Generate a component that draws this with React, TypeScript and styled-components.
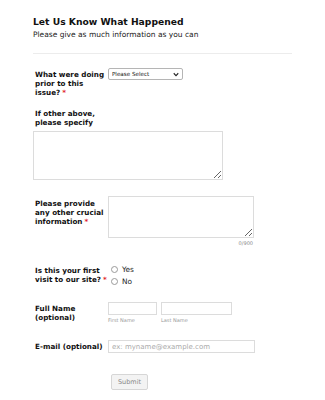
import React from "react";
import styled, { createGlobalStyle } from "styled-components";

const Global = createGlobalStyle`
  html, body { margin: 0; padding: 0; background: #fff; }
  body { font-family: "DejaVu Sans", Verdana, sans-serif; color: #111; }
  * { box-sizing: border-box; }
`;

const chevron =
  "data:image/svg+xml;utf8," +
  encodeURIComponent(
    '<svg xmlns="http://www.w3.org/2000/svg" width="8" height="6" viewBox="0 0 8 6"><path d="M1 1.5 L4 4.5 L7 1.5" fill="none" stroke="#222" stroke-width="1.4"/></svg>'
  );

const Page = styled.div`
  width: 325px;
  padding: 15px 33px 0 33px;
`;

const Header = styled.div`
  padding-bottom: 13px;
  border-bottom: 1px solid #ececec;
  width: 259px;
`;

const Title = styled.h1`
  margin: 0;
  font-size: 9.2px;
  line-height: 14px;
  font-weight: bold;
  color: #111;
`;

const Subtitle = styled.p`
  margin: 1px 0 0 0;
  font-size: 7.5px;
  line-height: 10px;
  color: #222;
`;

const Form = styled.form`
  display: flex;
  flex-direction: column;
`;

const Row = styled.div<{ $top: number; $stack?: boolean }>`
  display: flex;
  flex-direction: ${(p) => (p.$stack ? "column" : "row")};
  align-items: flex-start;
  margin-top: ${(p) => p.$top}px;
`;

const Label = styled.label<{ $width?: number; $pt?: number }>`
  width: ${(p) => (p.$width ? `${p.$width}px` : "75px")};
  padding-left: 2px;
  padding-top: ${(p) => p.$pt ?? 2}px;
  font-size: 7.2px;
  line-height: 9px;
  font-weight: bold;
  color: #111;
  flex-shrink: 0;
`;

const Req = styled.span`
  color: #e0141e;
  margin-left: 2px;
`;

const Select = styled.select`
  appearance: none;
  -webkit-appearance: none;
  width: 75px;
  height: 12px;
  font-family: "DejaVu Sans", Verdana, sans-serif;
  font-size: 5.6px;
  padding: 0 10px 0 3px;
  border: 1px solid #b5b5b5;
  border-radius: 2px;
  background: #fff url("${chevron}") no-repeat right 3px center / 6px 4.5px;
  color: #111;
  margin-left: 1px;
`;

const TextArea = styled.textarea<{ $w: number; $h: number }>`
  width: ${(p) => p.$w}px;
  height: ${(p) => p.$h}px;
  border: 1px solid #dcdcdc;
  border-radius: 0;
  padding: 2px;
  font-family: "DejaVu Sans", Verdana, sans-serif;
  font-size: 7px;
  display: block;
`;

const FieldCol = styled.div`
  display: flex;
  flex-direction: column;
`;

const Counter = styled.div`
  font-size: 5px;
  color: #888;
  text-align: right;
  margin-top: 2px;
  padding-right: 1px;
`;

const RadioList = styled.div`
  display: flex;
  flex-direction: column;
  gap: 3px;
  padding-left: 3px;
`;

const RadioItem = styled.label`
  display: flex;
  align-items: center;
  gap: 4px;
  font-size: 7.4px;
  line-height: 9px;
  color: #222;
`;

const Radio = styled.input`
  appearance: none;
  -webkit-appearance: none;
  width: 7px;
  height: 7px;
  margin: 0;
  border: 1px solid #9a9a9a;
  border-radius: 50%;
  background: #fff;
`;

const NameFields = styled.div`
  display: flex;
  gap: 4px;
`;

const SubField = styled.div`
  display: flex;
  flex-direction: column;
`;

const TextInput = styled.input<{ $w: number }>`
  width: ${(p) => p.$w}px;
  height: 13px;
  border: 1px solid #dcdcdc;
  border-radius: 0;
  padding: 0 3px;
  font-family: "DejaVu Sans", Verdana, sans-serif;
  font-size: 7px;
  color: #222;
  &::placeholder { color: #aaa; }
`;

const SubLabel = styled.span`
  font-size: 5px;
  line-height: 7px;
  color: #999;
  margin-top: 2px;
`;

const SubmitRow = styled.div`
  margin-top: 16px;
  padding-left: 78px;
`;

const SubmitButton = styled.button`
  width: 37px;
  height: 16px;
  border: 1px solid #d6d6d6;
  border-radius: 2px;
  background: #f3f3f3;
  color: #888;
  font-family: "DejaVu Sans", Verdana, sans-serif;
  font-size: 6.5px;
  padding: 0;
`;

export default function App() {
  return (
    <>
      <Global />
      <Page>
        <Header>
          <Title>Let Us Know What Happened</Title>
          <Subtitle>Please give as much information as you can</Subtitle>
        </Header>
        <Form onSubmit={(e) => e.preventDefault()}>
          <Row $top={14}>
            <Label $width={74}>
              What were doing prior to this issue?<Req>*</Req>
            </Label>
            <Select defaultValue="">
              <option value="">Please Select</option>
              <option>Browsing</option>
              <option>Other</option>
            </Select>
          </Row>
          <Row $top={12} $stack>
            <Label $width={100} $pt={0}>
              If other above,
              <br />
              please specify
            </Label>
            <TextArea $w={190} $h={49} style={{ marginTop: 4 }} />
          </Row>
          <Row $top={16}>
            <Label $width={75} $pt={3}>
              Please provide any other crucial information<Req>*</Req>
            </Label>
            <FieldCol>
              <TextArea $w={146} $h={42} />
              <Counter>0/900</Counter>
            </FieldCol>
          </Row>
          <Row $top={19}>
            <Label $width={75} $pt={1}>
              Is this your first visit to our site?<Req>*</Req>
            </Label>
            <RadioList>
              <RadioItem>
                <Radio type="radio" name="first" />
                Yes
              </RadioItem>
              <RadioItem>
                <Radio type="radio" name="first" />
                No
              </RadioItem>
            </RadioList>
          </Row>
          <Row $top={16}>
            <Label $width={75} $pt={2}>
              Full Name
              <br />
              (optional)
            </Label>
            <NameFields>
              <SubField>
                <TextInput $w={49} />
                <SubLabel>First Name</SubLabel>
              </SubField>
              <SubField>
                <TextInput $w={71} />
                <SubLabel>Last Name</SubLabel>
              </SubField>
            </NameFields>
          </Row>
          <Row $top={16}>
            <Label $width={75} $pt={2}>
              E-mail (optional)
            </Label>
            <TextInput $w={147} placeholder="ex: myname@example.com" />
          </Row>
          <SubmitRow>
            <SubmitButton type="submit">Submit</SubmitButton>
          </SubmitRow>
        </Form>
      </Page>
    </>
  );
}
